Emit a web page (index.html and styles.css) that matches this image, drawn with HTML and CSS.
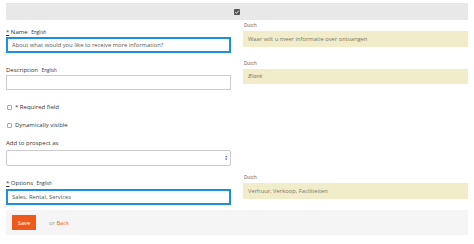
FILE: index.html
```html
<!DOCTYPE html>
<html>
<head>
<meta charset="utf-8">
<link rel="stylesheet" href="styles.css">
</head>
<body>
<div class="page">
  <div class="top-bar">
    <svg class="top-check" width="6" height="6" viewBox="0 0 6 6"><rect x="0" y="0" width="6" height="6" rx="0.8" fill="#555"/><path d="M1.2 3.1 L2.5 4.3 L4.8 1.7" stroke="#fff" stroke-width="0.9" fill="none"/></svg>
  </div>

  <div class="row row-first">
    <div class="cell left">
      <div class="label"><span class="req">*</span> Name <span class="lang">English</span></div>
      <div class="input active">About what would you like to receive more information?</div>
    </div>
    <div class="cell right">
      <div class="label-dutch">Dutch</div>
      <div class="trans">Waar wilt u meer informatie over ontvangen</div>
    </div>
  </div>

  <div class="row row-second">
    <div class="cell left">
      <div class="label">Description <span class="lang">English</span></div>
      <div class="input"></div>
    </div>
    <div class="cell right">
      <div class="label-dutch">Dutch</div>
      <div class="trans blank">Blank</div>
    </div>
  </div>

  <div class="checks">
    <label class="check"><span class="box"></span>* Required field</label>
    <label class="check"><span class="box"></span>Dynamically visible</label>
  </div>

  <div class="select-field">
    <div class="label label-select">Add to prospect as</div>
    <div class="select"><span class="arrows">&#9650;<br>&#9660;</span></div>
  </div>

  <div class="row row-third">
    <div class="cell left">
      <div class="label label-options"><span class="req">*</span> Options <span class="lang">English</span></div>
      <div class="input active">Sales, Rental, Services</div>
    </div>
    <div class="cell right">
      <div class="label-dutch">Dutch</div>
      <div class="trans">Verhuur, Verkoop, Faciliteiten</div>
    </div>
  </div>

  <div class="footer">
    <button class="save">Save</button>
    <span class="or">or <a class="back">Back</a></span>
  </div>
</div>
</body>
</html>
```
FILE: styles.css
```css
html, body {
  margin: 0;
  padding: 0;
  background: #ffffff;
}
body {
  font-family: "Open Sans", "DejaVu Sans", sans-serif;
  font-size: 5.8px;
  color: #333333;
}
.page {
  padding: 3px 6px 0 6px;
  width: 462px;
}
.top-bar {
  height: 17px;
  background: #e8e8e8;
  display: flex;
  align-items: center;
  justify-content: center;
}
.top-check {
  display: block;
}
.row {
  display: grid;
  grid-template-columns: 225px 225px;
  column-gap: 12px;
  align-items: start;
}
.row-first .right { padding-top: 2px; }
.row-first .left { padding-top: 9px; }
.row-second .right { padding-top: 7px; }
.row-second .left { padding-top: 14px; }
.row-third .right { padding-top: 8px; }
.row-third .left { padding-top: 14px; }
.label {
  height: 7px;
  line-height: 7px;
  margin-bottom: 1px;
  font-size: 6px;
  color: #333;
}
.label-select {
  margin-bottom: 3px;
}
.label-options {
  margin-bottom: 2px;
}
.req {
  text-decoration: underline;
}
.lang {
  font-size: 4.6px;
  margin-left: 2px;
}
.label-dutch {
  height: 7px;
  line-height: 7px;
  margin-bottom: 2px;
  padding-left: 1px;
  font-size: 4.6px;
  color: #555;
}
.input {
  box-sizing: border-box;
  height: 15px;
  border: 1px solid #cccccc;
  background: #fff;
  padding: 0 5px;
  line-height: 13px;
  color: #555;
}
.input.active {
  height: 16px;
  border: 2px solid #1d8fe0;
  line-height: 12px;
  padding-left: 4px;
}
.trans {
  box-sizing: border-box;
  height: 16px;
  background: #f1ecc9;
  padding: 0 5px;
  line-height: 16px;
  color: #7a7a6a;
}
.trans.blank {
  height: 15px;
  line-height: 15px;
  font-style: italic;
}
.checks {
  padding-top: 13px;
}
.check {
  display: flex;
  align-items: center;
  height: 8px;
  margin-bottom: 10px;
  padding-left: 1px;
  color: #333;
  font-size: 6px;
}
.box {
  box-sizing: border-box;
  width: 5px;
  height: 5px;
  border: 0.6px solid #aaa;
  border-radius: 1px;
  margin-right: 3px;
  background: #fff;
}
.select-field {
  width: 225px;
  padding-top: 1px;
}
.select {
  box-sizing: border-box;
  height: 16px;
  border: 1px solid #cccccc;
  border-radius: 2px;
  background: #fff;
  display: flex;
  align-items: center;
  justify-content: flex-end;
  padding-right: 3px;
}
.arrows {
  font-size: 2.4px;
  line-height: 2.6px;
  color: #333;
  text-align: center;
}
.footer {
  margin-top: 5px;
  height: 25px;
  background: #f5f5f5;
  display: flex;
  align-items: center;
  padding-left: 6px;
}
.save {
  font-family: "Open Sans", "DejaVu Sans", sans-serif;
  font-size: 5.8px;
  background: #ee5a1b;
  color: #fff;
  border: none;
  border-radius: 0;
  width: 24px;
  height: 15px;
  padding: 0;
  margin: 0;
}
.or {
  margin-left: 13px;
  color: #999;
}
.back {
  color: #ef6a34;
}
```
